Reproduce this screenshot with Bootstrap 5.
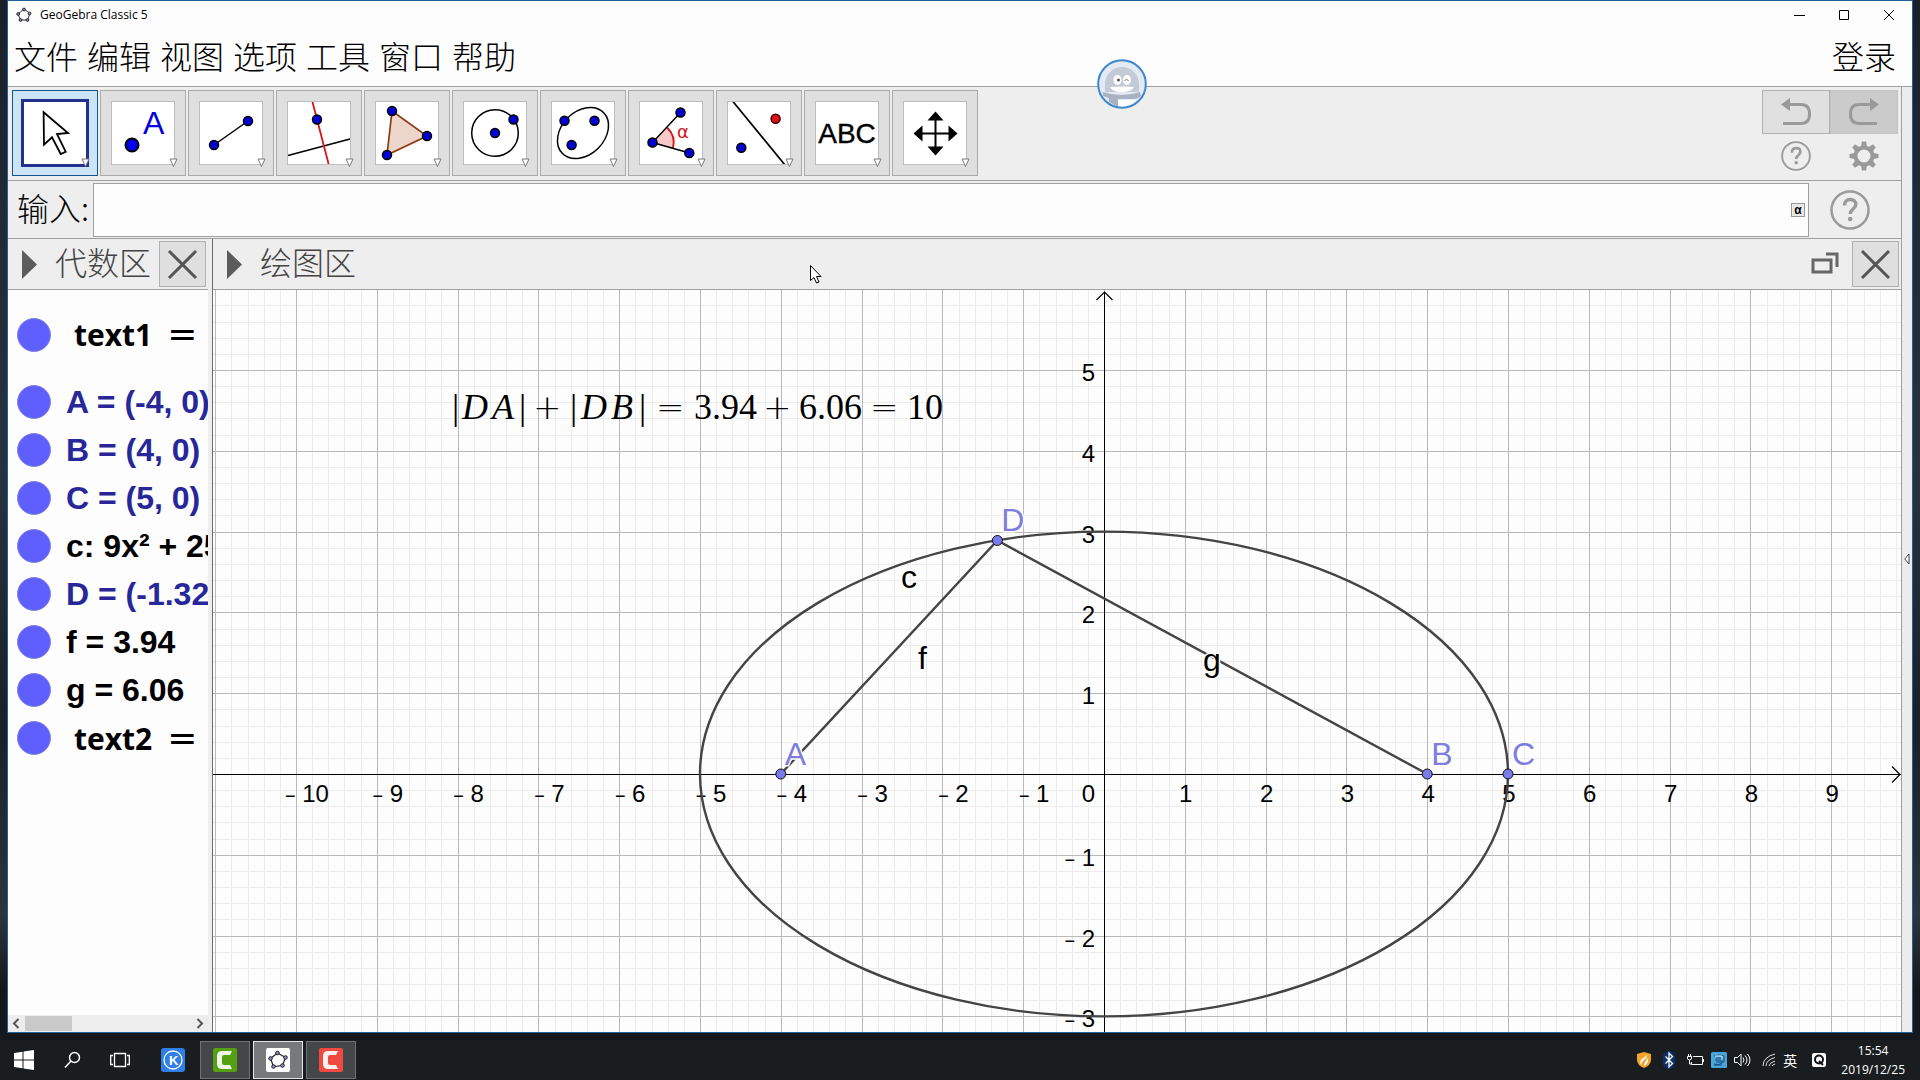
<!DOCTYPE html>
<html lang="zh-CN">
<head>
<meta charset="utf-8">
<meta name="viewport" content="width=device-width, initial-scale=1">
<title>GeoGebra Classic 5</title>
<link href="https://cdn.jsdelivr.net/npm/bootstrap@5.3.0/dist/css/bootstrap.min.css" rel="stylesheet">
<style>
  :root { --line: #a0a0a0; --panel: #eeeeee; --paper: #fdfdfd; }
  body { background: #191d21; font-family: "Liberation Sans", "Noto Sans CJK SC", sans-serif; color: #000; }
  .desktop { background: linear-gradient(#1b2129, #28323f 45%, #1a2027 70%, #2c353d 88%, #14181c 95%); }
  .app-window { margin: 0 7px 7px; border: 1px solid #1f6199; background: var(--paper); min-height: 0; }
  .cjk { font-family: "Noto Sans CJK SC", sans-serif; font-weight: 300; }
  .title-bar { height: 29px; padding: 0 16px 2px 8px; font: 12px/20px "Open Sans", sans-serif; }
  .title-bar svg, .icon-btn svg, .tool svg, .task svg, .tray svg { display: block; flex: none; }
  .plain-btn { border: 0; background: none; padding: 0; }
  .menu-bar { height: 57px; padding: 0 16px 6px 6px; border-bottom: 1px solid var(--line); font-size: 32px; line-height: 40px; }
  .menu-bar a { color: #000; text-decoration: none; }
  .menu-list { gap: 9px; }
  .workspace { background: var(--panel); min-height: 0; }
  .dock-edge { width: 11px; border-left: 1px solid var(--line); background: #ececec; }
  .tool-bar { height: 94px; padding: 3px 3px 3px 4px; border-bottom: 1px solid var(--line); }
  .tool-list { gap: 2px; }
  .tool { position: relative; width: 86px; height: 86px; padding: 0; border: 1px solid #a9a9a9; background: #dfdfdf; }
  .tool > .face { background: #fff; outline: 1px solid #bdbdbd; outline-offset: -1px; }
  .tool > .drop { position: absolute; right: 7px; bottom: 8px; }
  .tool.active { background: #cce4f7; border-color: #14558f; }
  .tool.active > .face { outline: 3px solid #26318f; outline-offset: 0; }
  .icon-btn { border: 1px solid transparent; background: none; padding: 0; color: #9a9a9a; }
  .hist { width: 68px; height: 44px; background: #e0e0e0; border-color: #b0b0b0; }
  .hist:disabled { background: #cbcbcb; border-color: #c2c2c2; color: #9a9a9a; }
  .aux { width: 68px; height: 36px; }
  .input-row { height: 58px; padding: 2px 30px 2px 8px; border-bottom: 1px solid var(--line); }
  .input-row label { font-size: 32px; line-height: 40px; width: 77px; padding: 0 0 6px 1px; white-space: nowrap; }
  .entry { height: 54px; border: 1px solid var(--line); background: var(--paper); padding-right: 3px; }
  .entry input { border: 0; background: none; outline: 0; font-size: 28px; padding: 0 8px; min-width: 0; }
  .alpha-btn { width: 14px; height: 14px; border: 1px solid #999; background: #e9e9e9; font: bold 12px/10px "Liberation Sans", sans-serif; padding: 0; }
  .algebra { width: 204px; }
  .algebra-in { width: 200px; }
  .view-head { height: 51px; border-bottom: 1px solid var(--line); color: #444; font-size: 32px; line-height: 40px; padding: 0 2px 0 14px; }
  .view-head .name { margin-left: 18px; padding-bottom: 7px; white-space: nowrap; }
  .detach { margin-right: 12px; }
  .close-btn { width: 47px; height: 46px; border-color: #b0b0b0; background: #dfdfdf; color: #555; }
  .obj-list { background: var(--paper); padding-top: 11px; min-height: 0; }
  .obj { height: 48px; padding-left: 9px; gap: 15px; font: bold 32px/40px "Liberation Sans", sans-serif; white-space: nowrap; overflow: hidden; }
  .obj.tall { height: 67px; margin-bottom: 10px; }
  .obj .dot { width: 34px; height: 34px; border-radius: 50%; background: #5f5fff; border: 1px solid #8585e0; flex: none; padding: 0; }
  .obj.point { color: #27279a; }
  .obj.latex { font-family: "Open Sans", sans-serif; font-size: 30px; gap: 23px; }
  .obj.latex .eq { font-family: "DejaVu Sans", sans-serif; font-weight: 400; font-size: 36px; margin-left: 15px; }
  .scroll-x { height: 17px; background: #ededed; }
  .scroll-x .plain-btn { width: 17px; height: 17px; }
  .scroll-x .thumb { width: 47px; height: 15px; background: #c9c9c9; }
  .graphics { border-left: 1px solid #6b6b6b; min-width: 0; }
  .plot { background: var(--paper); min-height: 0; }
  .plot svg { display: block; width: 100%; height: 100%; overflow: hidden; }
  .tick { font: 24px "Liberation Sans", sans-serif; }
  .tag { font: 32px "Liberation Sans", sans-serif; paint-order: stroke; stroke: #fdfdfd; stroke-width: 3px; }
  .formula { font: 36px "Liberation Serif", serif; }
  .formula .it { font-style: italic; }
  .formula .op { font-family: "DejaVu Sans", sans-serif; font-weight: 200; font-size: 34px; }
  .buddy { position: absolute; left: 1097px; top: 59px; }
  .pointer { position: absolute; left: 809px; top: 264px; }
  .edge-tab { position: absolute; right: 10px; top: 552px; }
  .taskbar { height: 40px; background: #191d20; color: #fff; padding-right: 15px; }
  .task-list { gap: 3px; margin-left: 5px; }
  .task { width: 50px; height: 38px; border: 1px solid transparent; background: none; padding: 0; }
  .task.running { background: #43474a; border-color: #6d7174; }
  .task.current { background: #77797b; border-color: #e6e6e6; }
  .task.slim { width: 48px; }
  .tray { gap: 7px; font: 14px/20px "Noto Sans CJK SC", sans-serif; }
  .clock { font: 12px/19px "Open Sans", sans-serif; text-align: center; margin-left: 8px; }
</style>
<script src="https://cdn.jsdelivr.net/npm/bootstrap@5.3.0/dist/js/bootstrap.bundle.min.js"></script>
</head>
<body class="vh-100 d-flex flex-column overflow-hidden">
<svg width="0" height="0" class="position-absolute" aria-hidden="true">
  <defs>
    <g id="drop"><path d="M1 1h7L4.500 8.500z" fill="#fff" stroke="#777"/></g>
    <g id="help"><circle cx="20" cy="20" r="18.500" fill="none" stroke="currentColor" stroke-width="2.500"/><path d="M14.500 15.500c0-4 2.500-6 5.700-6 3.400 0 5.600 2 5.600 5 0 4.500-5.600 4.500-5.600 9.500" fill="none" stroke="currentColor" stroke-width="3.500"/><circle cx="20.200" cy="29" r="2.300" fill="currentColor"/></g>
    <g id="cross"><path d="M2 2l27 27M29 2L2 29" stroke="currentColor" stroke-width="3" fill="none"/></g>
  </defs>
</svg>
<div class="desktop flex-grow-1 d-flex flex-column overflow-hidden">
  <main class="app-window flex-grow-1 d-flex flex-column">
    <header class="title-bar d-flex align-items-center justify-content-between">
      <div class="d-flex align-items-center gap-1">
        <svg width="16" height="16" viewBox="0 0 16 16"><g fill="none" stroke="#333" stroke-width="1"><path d="M8 2L14 6.500 11.500 13H4.500L2 7z"/></g><g fill="#99b" stroke="#223"><circle cx="8" cy="2.500" r="1.400"/><circle cx="13.500" cy="6.500" r="1.400"/><circle cx="11.500" cy="13" r="1.400"/><circle cx="4.500" cy="13" r="1.400"/><circle cx="2.200" cy="7" r="1.400"/></g></svg>
        <span class="ps-1">GeoGebra Classic 5</span>
      </div>
      <div class="d-flex align-items-center gap-4">
        <button class="plain-btn me-2" aria-label="Minimize"><svg width="13" height="12"><path d="M1 6.500h11" stroke="#000"/></svg></button>
        <button class="plain-btn me-2" aria-label="Maximize"><svg width="13" height="12"><path d="M1.500 1.500h9v9h-9z" fill="none" stroke="#000"/></svg></button>
        <button class="plain-btn" aria-label="Close"><svg width="13" height="12"><path d="M1 1l10 10M11 1L1 11" stroke="#000"/></svg></button>
      </div>
    </header>
    <nav class="menu-bar cjk d-flex align-items-center justify-content-between" aria-label="Menu">
      <div class="menu-list d-flex">
        <a href="#">文件</a><a href="#">编辑</a><a href="#">视图</a><a href="#">选项</a><a href="#">工具</a><a href="#">窗口</a><a href="#">帮助</a>
      </div>
      <a href="#">登录</a>
    </nav>
    <div class="workspace flex-grow-1 d-flex">
      <div class="flex-grow-1 d-flex flex-column overflow-hidden">
        <div class="tool-bar d-flex justify-content-between align-items-start">
          <div class="tool-list d-flex">
            <button class="tool active d-flex align-items-center justify-content-center" aria-label="Move"><svg class="face" width="62" height="62" viewBox="1 1 62 62"><path d="M20.600 11.300L45 32l-11 1 8.700 17.700-5 2.300L29 36.300l-8 7.400z" fill="#fff" stroke="#000" stroke-width="1.800"/></svg><svg class="drop" width="9" height="9"><use href="#drop"/></svg></button>
            <button class="tool d-flex align-items-center justify-content-center" aria-label="Point"><svg class="face" width="64" height="64" viewBox="0 0 64 64"><circle cx="21" cy="44" r="6.500" fill="#0000f0" stroke="#000" stroke-width="2"/><text x="32" y="33" font-size="32" fill="#0000dd" font-family="Liberation Sans, sans-serif">A</text></svg><svg class="drop" width="9" height="9"><use href="#drop"/></svg></button>
            <button class="tool d-flex align-items-center justify-content-center" aria-label="Line"><svg class="face" width="64" height="64" viewBox="0 0 64 64"><path d="M15 44l34-24" stroke="#000" stroke-width="1.500"/><g fill="#0000d6" stroke="#000" stroke-width="1.500"><circle cx="15" cy="44" r="4.500"/><circle cx="49" cy="20" r="4.500"/></g></svg><svg class="drop" width="9" height="9"><use href="#drop"/></svg></button>
            <button class="tool d-flex align-items-center justify-content-center" aria-label="Perpendicular line"><svg class="face" width="64" height="64" viewBox="0 0 64 64"><path d="M1 54.500L63 38" stroke="#000" stroke-width="1.500"/><path d="M25.500 1L41.600 63" stroke="#d8141c" stroke-width="1.800"/><circle cx="30" cy="18.500" r="4.500" fill="#0000d6" stroke="#000" stroke-width="1.500"/></svg><svg class="drop" width="9" height="9"><use href="#drop"/></svg></button>
            <button class="tool d-flex align-items-center justify-content-center" aria-label="Polygon"><svg class="face" width="64" height="64" viewBox="0 0 64 64"><path d="M17 10l35 25-40 19z" fill="#ecd6cb" stroke="#8d3c12" stroke-width="1.700"/><g fill="#0000d6" stroke="#000" stroke-width="1.500"><circle cx="17" cy="10" r="4.500"/><circle cx="52" cy="35" r="4.500"/><circle cx="12" cy="54" r="4.500"/></g></svg><svg class="drop" width="9" height="9"><use href="#drop"/></svg></button>
            <button class="tool d-flex align-items-center justify-content-center" aria-label="Circle"><svg class="face" width="64" height="64" viewBox="0 0 64 64"><circle cx="32" cy="32" r="23.300" fill="none" stroke="#000" stroke-width="1.500"/><g fill="#0000d6" stroke="#000" stroke-width="1.500"><circle cx="32" cy="32" r="4.500"/><circle cx="50.500" cy="18.500" r="4.500"/></g></svg><svg class="drop" width="9" height="9"><use href="#drop"/></svg></button>
            <button class="tool d-flex align-items-center justify-content-center" aria-label="Conic"><svg class="face" width="64" height="64" viewBox="0 0 64 64"><ellipse cx="32" cy="32" rx="29" ry="21.500" transform="rotate(-45 32 32)" fill="none" stroke="#000" stroke-width="1.500"/><g fill="#0000d6" stroke="#000" stroke-width="1.500"><circle cx="13.500" cy="19.700" r="4.500"/><circle cx="43.500" cy="19.700" r="4.500"/><circle cx="20.600" cy="44" r="4.500"/></g></svg><svg class="drop" width="9" height="9"><use href="#drop"/></svg></button>
            <button class="tool d-flex align-items-center justify-content-center" aria-label="Angle"><svg class="face" width="64" height="64" viewBox="0 0 64 64"><path d="M13.500 41.500L28 26.500A21 21 0 0 1 34 47z" fill="#f9c8c8"/><path d="M28 26.500A21 21 0 0 1 34 47" fill="none" stroke="#d8141c" stroke-width="1.800"/><path d="M41.500 11.500l-28 30 37 10.500" fill="none" stroke="#000" stroke-width="1.500"/><g fill="#0000d6" stroke="#000" stroke-width="1.500"><circle cx="13.500" cy="41.500" r="4.500"/><circle cx="41.500" cy="11.500" r="4.500"/><circle cx="50.300" cy="52" r="4.500"/></g><text x="38" y="37" font-size="18" fill="#d8141c" font-family="DejaVu Sans, sans-serif">α</text></svg><svg class="drop" width="9" height="9"><use href="#drop"/></svg></button>
            <button class="tool d-flex align-items-center justify-content-center" aria-label="Reflect"><svg class="face" width="64" height="64" viewBox="0 0 64 64"><path d="M5.500 0L58 64" stroke="#000" stroke-width="1.700"/><circle cx="14.300" cy="46.700" r="4.500" fill="#0000d6" stroke="#000" stroke-width="1.500"/><circle cx="48.600" cy="17.700" r="4.500" fill="#dc1016" stroke="#400" stroke-width="1.500"/></svg><svg class="drop" width="9" height="9"><use href="#drop"/></svg></button>
            <button class="tool d-flex align-items-center justify-content-center" aria-label="Text"><svg class="face" width="64" height="64" viewBox="0 0 64 64"><text x="32" y="42" font-size="28" text-anchor="middle" stroke="#000" stroke-width=".4" font-family="Liberation Sans, sans-serif">ABC</text></svg><svg class="drop" width="9" height="9"><use href="#drop"/></svg></button>
            <button class="tool d-flex align-items-center justify-content-center" aria-label="Move view"><svg class="face" width="64" height="64" viewBox="0 0 64 64"><path d="M32.500 14v36M14 32.500h36" stroke="#000" stroke-width="2"/><path d="M32.500 10.500l8 9h-16zM32.500 54.500l8-9h-16zM10.500 32.500l9-8v16zM54.500 32.500l-9-8v16z"/></svg><svg class="drop" width="9" height="9"><use href="#drop"/></svg></button>
          </div>
          <div class="d-flex flex-column">
            <div class="d-flex gap-0">
              <button class="icon-btn hist d-flex align-items-center justify-content-center" aria-label="Undo"><svg width="34" height="30" viewBox="0 0 34 30"><path d="M11 7.500h11c6 0 8.500 4 8.500 9.500s-2.500 9.500-8.500 9.500H4" fill="none" stroke="currentColor" stroke-width="3"/><path d="M2 7.500L11 1v13z" fill="currentColor"/></svg></button>
              <button class="icon-btn hist d-flex align-items-center justify-content-center" aria-label="Redo" disabled><svg width="34" height="30" viewBox="0 0 34 30"><path d="M23 7.500H12c-6 0-8.500 4-8.500 9.500s2.500 9.500 8.500 9.500h18" fill="none" stroke="currentColor" stroke-width="3"/><path d="M32 7.500L23 1v13z" fill="currentColor"/></svg></button>
            </div>
            <div class="d-flex pt-1">
              <button class="icon-btn aux d-flex align-items-center justify-content-center" aria-label="Help"><svg width="30" height="30" viewBox="0 0 40 40"><use href="#help"/></svg></button>
              <button class="icon-btn aux d-flex align-items-center justify-content-center" aria-label="Settings"><svg width="30" height="30" viewBox="-15 -15 30 30"><circle r="8.500" fill="none" stroke="currentColor" stroke-width="4"/><g fill="currentColor"><path id="tooth" d="M-3-9.500L-2-14.500H2L3-9.500z"/><use href="#tooth" transform="rotate(45)"/><use href="#tooth" transform="rotate(90)"/><use href="#tooth" transform="rotate(135)"/><use href="#tooth" transform="rotate(180)"/><use href="#tooth" transform="rotate(225)"/><use href="#tooth" transform="rotate(270)"/><use href="#tooth" transform="rotate(315)"/></g></svg></button>
            </div>
          </div>
        </div>
        <div class="input-row d-flex align-items-center">
          <label for="cmd" class="cjk">输入:</label>
          <div class="entry flex-grow-1 d-flex align-items-center">
            <input id="cmd" type="text" class="flex-grow-1">
            <button class="alpha-btn" aria-label="Symbols">α</button>
          </div>
          <button class="icon-btn ms-3 ps-1" aria-label="Input help"><svg width="40" height="40" viewBox="0 0 40 40"><use href="#help"/></svg></button>
        </div>
        <div class="flex-grow-1 d-flex overflow-hidden">
          <section class="algebra flex-shrink-0 d-flex">
            <div class="algebra-in d-flex flex-column">
              <div class="view-head cjk d-flex align-items-center">
                <svg width="15" height="29"><path d="M0 0l15 14.500L0 29z" fill="#5c5c5c"/></svg>
                <span class="name">代数区</span>
                <button class="icon-btn close-btn ms-auto d-flex align-items-center justify-content-center" aria-label="Close algebra"><svg width="31" height="31"><use href="#cross"/></svg></button>
              </div>
              <div class="obj-list flex-grow-1 overflow-hidden">
                <div class="obj latex tall d-flex align-items-center"><button class="dot" aria-label="Toggle text1"></button><span>text1<span class="eq">=</span></span></div>
                <div class="obj point d-flex align-items-center"><button class="dot" aria-label="Toggle A"></button><span>A = (-4, 0)</span></div>
                <div class="obj point d-flex align-items-center"><button class="dot" aria-label="Toggle B"></button><span>B = (4, 0)</span></div>
                <div class="obj point d-flex align-items-center"><button class="dot" aria-label="Toggle C"></button><span>C = (5, 0)</span></div>
                <div class="obj d-flex align-items-center"><button class="dot" aria-label="Toggle c"></button><span>c: 9x² + 25y² = 225</span></div>
                <div class="obj point d-flex align-items-center"><button class="dot" aria-label="Toggle D"></button><span>D = (-1.32, 2.89)</span></div>
                <div class="obj d-flex align-items-center"><button class="dot" aria-label="Toggle f"></button><span>f = 3.94</span></div>
                <div class="obj d-flex align-items-center"><button class="dot" aria-label="Toggle g"></button><span>g = 6.06</span></div>
                <div class="obj latex d-flex align-items-center"><button class="dot" aria-label="Toggle text2"></button><span>text2<span class="eq">=</span></span></div>
              </div>
              <div class="scroll-x d-flex align-items-center">
                <button class="plain-btn" aria-label="Scroll left"><svg width="17" height="17" class="d-block"><path d="M10.500 4L6 8.500l4.500 4.500" fill="none" stroke="#555" stroke-width="2"/></svg></button>
                <div class="thumb"></div>
                <button class="plain-btn ms-auto" aria-label="Scroll right"><svg width="17" height="17" class="d-block"><path d="M6.500 4L11 8.500 6.500 13" fill="none" stroke="#555" stroke-width="2"/></svg></button>
              </div>
            </div>
          </section>
          <section class="graphics flex-grow-1 d-flex flex-column">
            <div class="view-head cjk d-flex align-items-center">
              <svg width="15" height="29"><path d="M0 0l15 14.500L0 29z" fill="#5c5c5c"/></svg>
              <span class="name">绘图区</span>
              <button class="icon-btn detach ms-auto" aria-label="Detach view"><svg width="28" height="24" class="d-block" fill="none" stroke="#666"><path d="M2 8h18v12H2z" stroke-width="3"/><path d="M15 2h11v13" stroke-width="3"/></svg></button>
              <button class="icon-btn close-btn d-flex align-items-center justify-content-center" aria-label="Close graphics"><svg width="31" height="31"><use href="#cross"/></svg></button>
            </div>
            <div class="plot flex-grow-1 overflow-hidden"><svg id="plot" role="img" aria-label="Ellipse with foci A and B"></svg></div>
          </section>
        </div>
      </div>
      <div class="dock-edge flex-shrink-0"></div>
    </div>
  </main>
</div>
<footer class="taskbar flex-shrink-0 d-flex align-items-center justify-content-between">
  <div class="d-flex align-items-center">
    <button class="task slim d-flex align-items-center justify-content-center" aria-label="Start"><svg width="20" height="20" fill="#fff"><path d="M0 3l8.500-1.200v7.700H0zM9.500 1.600L20 0v9.500H9.500zM0 10.500h8.500v7.700L0 17zM9.500 10.500H20V20L9.500 18.400z"/></svg></button>
    <button class="task slim d-flex align-items-center justify-content-center" aria-label="Search"><svg width="17" height="18" fill="none" stroke="#fff" stroke-width="1.500"><circle cx="10.500" cy="6.500" r="5"/><path d="M7 10L1 16.500"/></svg></button>
    <button class="task slim d-flex align-items-center justify-content-center" aria-label="Task view"><svg width="20" height="16" fill="none" stroke="#fff" stroke-width="1.300"><path d="M4.500 1.500h11v13h-11zM3 3.500H.7v9H3M17 3.500h2.300v9H17"/></svg></button>
    <div class="task-list d-flex align-items-center">
      <button class="task slim d-flex align-items-center justify-content-center" aria-label="K"><svg width="24" height="24"><rect width="24" height="24" rx="3" fill="#2f7fe6"/><circle cx="12" cy="12" r="9" fill="none" stroke="#fff" stroke-width="1.300"/><text x="8" y="17" font-size="13" font-weight="bold" fill="#fff" font-family="Liberation Sans, sans-serif">K</text></svg></button>
      <button class="task running d-flex align-items-center justify-content-center" aria-label="Camtasia"><svg width="24" height="24"><rect width="24" height="24" rx="2" fill="#55a012"/><path d="M19 3l-2 4h-6q-2 0-2 2v6q0 2 2 2h6l2 4H9q-5 0-5-5V8q0-5 5-5z" fill="#f1f6ea"/></svg></button>
      <button class="task current d-flex align-items-center justify-content-center" aria-label="GeoGebra"><svg width="24" height="24"><rect width="24" height="24" rx="2" fill="#fff"/><path d="M11.500 5l8 4.500-3 8-9 1-3-8z" fill="none" stroke="#222" stroke-width="1.200"/><g fill="#8c8cc8" stroke="#222"><circle cx="11.500" cy="5" r="1.800"/><circle cx="19.500" cy="9.500" r="1.800"/><circle cx="16.500" cy="17.500" r="1.800"/><circle cx="7.500" cy="18.500" r="1.800"/><circle cx="4.500" cy="10.500" r="1.800"/></g></svg></button>
      <button class="task running d-flex align-items-center justify-content-center" aria-label="Camtasia Recorder"><svg width="24" height="24"><rect width="24" height="24" rx="2" fill="#f0493f"/><path d="M19 3l-2 4h-6q-2 0-2 2v6q0 2 2 2h6l2 4H9q-5 0-5-5V8q0-5 5-5z" fill="#fff0ee"/></svg></button>
    </div>
  </div>
  <div class="tray d-flex align-items-center">
    <svg width="14" height="16"><path d="M7 0l7 2v6q0 5-7 8-7-3-7-8V2z" fill="#f2a52c"/><path d="M10 3q0 3-3 5t-3 5q-2-4 1-6t5-4zM11 6q1 5-4 8 0-3 4-8z" fill="#fff"/></svg>
    <svg width="14" height="18" class="mx-1"><rect x="1" width="12" height="18" rx="6" fill="#0a2f6b"/><path d="M3.500 5.500l7 7L7 16V2l3.500 3.500-7 7" fill="none" stroke="#fff" stroke-width="1.300"/></svg>
    <svg width="17" height="14" fill="none" stroke="#fff"><path d="M6 3.500h9.500v8H4.500V9M16.500 6v3M.5 3.500h4v2.500q-2 2-4 0zM1.500 3.500V1M3.500 3.500V1M2.500 7v4h2"/></svg>
    <svg width="16" height="16"><rect width="16" height="16" rx="1.500" fill="#4aa6d8"/><path d="M3 4q5-2 10 0v6H5M5 6h6v5q-4 3-8 1M4 8h6M3 13h8" fill="none" stroke="#174d7c"/><path d="M4 4h7v4" fill="none" stroke="#d8f1ff"/></svg>
    <svg width="17" height="16" fill="none" stroke="#fff"><path d="M.5 5.500h3L7 2v12l-3.500-3.500h-3z"/><path d="M9 5.500q2 2.500 0 5M11 3.500q4 4.500 0 9M13.500 2q5 6 0 12"/></svg>
    <svg width="14" height="14" fill="none" stroke="#ddd" class="ms-1"><path d="M1 13Q1 4 13 1M4 13q0-6 9-8.500M7 13q0-3 6-5M10 13q0-1 3-2"/></svg>
    <span>英</span>
    <svg width="14" height="14" class="ms-2"><rect width="14" height="14" rx="2" fill="#fff"/><circle cx="7" cy="6.500" r="4" fill="none" stroke="#111" stroke-width="2"/><path d="M7 8l4 4" stroke="#111" stroke-width="2"/></svg>
    <div class="clock">15:54<br>2019/12/25</div>
  </div>
</footer>

<svg class="buddy" width="50" height="50" viewBox="0 0 50 50" aria-hidden="true"><circle cx="25" cy="25" r="23.800" fill="#e3eaf3"/><path d="M8 33V25a17 17 0 0 1 34 0v8z" fill="#c4cad6"/><path d="M6 33q18 6 37 0l1 4q-3 3-6 3H21v8l-9-5v-4l-6-2z" fill="#a9b2c3"/><path d="M21 41h19q-7 7-15 7.500h-4z" fill="#fff"/><ellipse cx="20.500" cy="21" rx="4" ry="5" fill="#fff"/><ellipse cx="30" cy="21" rx="4" ry="5" fill="#fff"/><circle cx="21.500" cy="21" r="1.500" fill="#555"/><path d="M27.500 21.500q2-2 4 0" fill="none" stroke="#777"/><path d="M13 28q12-1 24 0-2 5-12 5t-12-5z" fill="#fff"/><circle cx="25" cy="25" r="23.800" fill="none" stroke="#3d87cd" stroke-width="2"/></svg>
<svg class="pointer" width="14" height="21" viewBox="0 0 14 21" aria-hidden="true"><path d="M1.500 1.500v15l3.500-3 2.500 5.500 2.500-1-2.500-5.500H12z" fill="#fff" stroke="#000"/></svg>
<svg class="edge-tab" width="6" height="14" aria-hidden="true"><path d="M5 2v10L.8 7z" fill="#fff" stroke="#444"/></svg>

<script>
(function () {
  var svg = document.getElementById('plot');
  var NS = 'http://www.w3.org/2000/svg';
  var UNIT = 80.8, OX = 891, OY = 484;
  function add(name, attrs, text) {
    var el = document.createElementNS(NS, name);
    for (var k in attrs) el.setAttribute(k, attrs[k]);
    if (text !== undefined) el.textContent = text;
    svg.appendChild(el);
    return el;
  }
  function px(x) { return OX + x * UNIT; }
  function py(y) { return OY - y * UNIT; }
  function snap(v) { return Math.round(v) + 0.5; }
  function gridLines(step, color, w, h) {
    var d = '', i;
    for (i = Math.ceil(-OX / step); OX + i * step < w; i++) d += 'M' + snap(OX + i * step) + ' 0V' + h;
    for (i = Math.ceil(-OY / step); OY + i * step < h; i++) d += 'M0 ' + snap(OY + i * step) + 'H' + w;
    add('path', { d: d, stroke: color, fill: 'none' });
  }
  function tick(n, x, y, anchor) {
    var t = add('text', { x: x, y: y, 'text-anchor': anchor, 'class': 'tick' });
    if (n < 0) {
      var s = document.createElementNS(NS, 'tspan');
      s.setAttribute('font-size', 18);
      s.textContent = '−';
      t.appendChild(s);
    }
    t.appendChild(document.createTextNode((n < 0 ? ' ' : '') + Math.abs(n)));
  }
  function draw() {
    var w = svg.clientWidth, h = svg.clientHeight, n;
    svg.replaceChildren();
    gridLines(UNIT / 5, '#ececec', w, h);
    gridLines(UNIT, '#b9b9b9', w, h);
    add('path', { d: 'M0 ' + snap(OY) + 'H' + w + 'M' + snap(OX) + ' 2V' + h, stroke: '#000', fill: 'none' });
    add('path', { d: 'M' + (OX - 7.5) + ' 10L' + (OX + 0.5) + ' 2l8 8M' + (w - 9) + ' ' + (OY - 7.5) + 'l8 8l-8 8', stroke: '#000', fill: 'none', 'stroke-width': 1.2 });
    for (n = Math.ceil(-OX / UNIT) + 1; px(n) < w - 20; n++) {
      if (n) tick(n, px(n) + (n < 0 ? 11 : 1), OY + 28, 'middle');
    }
    tick(0, OX - 9, OY + 28, 'end');
    for (n = Math.ceil((OY - h) / UNIT); py(n) > 20; n++) if (n) tick(n, OX - 9, py(n) + 11, 'end');
    add('ellipse', { cx: px(0), cy: py(0), rx: 5 * UNIT, ry: 3 * UNIT, fill: 'none', stroke: '#444', 'stroke-width': 2.4 });
    var D = [-1.32, 2.89];
    add('path', { d: 'M' + px(-4) + ' ' + py(0) + 'L' + px(D[0]) + ' ' + py(D[1]) + 'L' + px(4) + ' ' + py(0), fill: 'none', stroke: '#444', 'stroke-width': 2.4 });
    [['A', -4, 0], ['B', 4, 0], ['C', 5, 0], ['D'].concat(D)].forEach(function (p) {
      add('text', { x: px(p[1]) + 4, y: py(p[2]) - 9, 'class': 'tag', fill: '#7d7de0' }, p[0]);
      add('circle', { cx: px(p[1]), cy: py(p[2]), r: 5, fill: '#7a7aed', stroke: '#111' });
    });
    [['c', 688, 298], ['f', 705, 379], ['g', 990, 381]].forEach(function (p) {
      add('text', { x: p[1], y: p[2], 'class': 'tag', fill: '#000' }, p[0]);
    });
    var f = add('text', { y: 129, 'class': 'formula' });
    [['|', 239], ['D', 249, 'it'], ['A', 279, 'it'], ['|', 306], ['+', 320, 'op'], ['|', 357], ['D', 368, 'it'], ['B', 398, 'it'], ['|', 426],
     ['=', 443, 'op'], ['3.94', 481], ['+', 550, 'op'], ['6.06', 586], ['=', 657, 'op'], ['10', 694]].forEach(function (p) {
      var s = document.createElementNS(NS, 'tspan');
      s.setAttribute('x', p[1]);
      if (p[2]) s.setAttribute('class', p[2]);
      s.textContent = p[0];
      f.appendChild(s);
    });
  }
  draw();
  window.addEventListener('resize', draw);
})();
</script>
</body>
</html>
